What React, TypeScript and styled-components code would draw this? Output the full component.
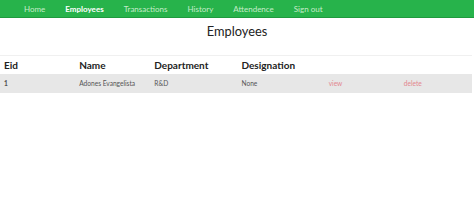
import React from "react";
import styled, { createGlobalStyle } from "styled-components";

const Global = createGlobalStyle`
  body { margin: 0; background: #fff; font-family: Lato, "Open Sans", sans-serif; }
`;

const Nav = styled.nav`
  height: 17px;
  background: #27b34b;
  display: flex;
  align-items: center;
  padding-left: 24px;
  border-bottom: 1px solid #1f9a3e;
`;

const NavItem = styled.a<{ $active?: boolean }>`
  font-size: 8px;
  color: ${(p) => (p.$active ? "#ffffff" : "#c5ecc9")};
  font-weight: ${(p) => (p.$active ? 700 : 400)};
  margin-right: 20px;
  text-decoration: none;
`;

const Title = styled.h1`
  margin: 0;
  padding-top: 5px;
  font-size: 12.8px;
  font-weight: 400;
  color: #222;
  text-align: center;
  height: 32px;
  box-sizing: border-box;
  line-height: 17px;
`;

const Table = styled.table`
  width: 472px;
  margin-top: 5px;
  border-collapse: collapse;
  border-top: 1px solid #f0f0f0;
`;

const Th = styled.th<{ $w: number }>`
  width: ${(p) => p.$w}px;
  text-align: left;
  font-size: 10px;
  font-weight: 700;
  color: #222;
  padding: 5px 0 4px 4px;
  height: 9px;
  box-sizing: content-box;
  line-height: 9px;
`;

const Tr = styled.tr`
  background: #e7e7e7;
`;

const Td = styled.td<{ $bold?: boolean; $link?: boolean }>`
  font-size: 6.6px;
  color: ${(p) => (p.$link ? "#e3868f" : "#555")};
  font-weight: ${(p) => (p.$bold ? 900 : 400)};
  padding: 5px 0 5px 4px;
  height: 9px;
  line-height: 9px;
`;

const cols = [
  { label: "Eid", w: 71 },
  { label: "Name", w: 71 },
  { label: "Department", w: 83 },
  { label: "Designation", w: 83 },
  { label: "", w: 71 },
  { label: "", w: 68 },
];

export default function App() {
  return (
    <>
      <Global />
      <Nav>
        <NavItem>Home</NavItem>
        <NavItem $active>Employees</NavItem>
        <NavItem>Transactions</NavItem>
        <NavItem>History</NavItem>
        <NavItem>Attendence</NavItem>
        <NavItem>Sign out</NavItem>
      </Nav>
      <Title>Employees</Title>
      <Table>
        <thead>
          <tr>
            {cols.map((c, i) => (
              <Th key={i} $w={c.w}>{c.label}</Th>
            ))}
          </tr>
        </thead>
        <tbody>
          <Tr>
            <Td $bold>1</Td>
            <Td>Adones Evangelista</Td>
            <Td>R&amp;D</Td>
            <Td>None</Td>
            <Td $link>view</Td>
            <Td $link>delete</Td>
          </Tr>
        </tbody>
      </Table>
    </>
  );
}
